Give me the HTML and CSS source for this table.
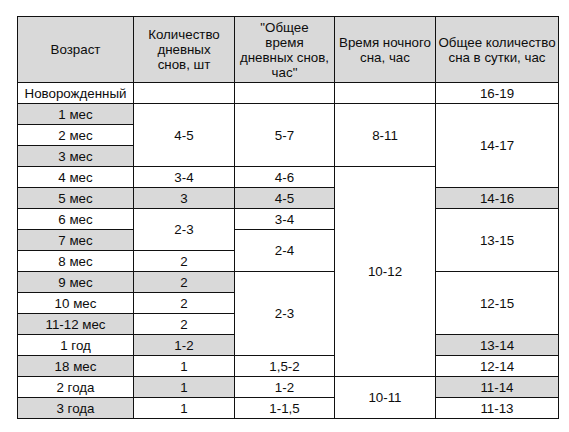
FILE: index.html
```html
<!DOCTYPE html>
<html lang="ru">
<head>
<meta charset="utf-8">
<title>Сон ребенка</title>
<link rel="stylesheet" href="styles.css">
</head>
<body>
<table class="sleep">
  <colgroup>
    <col class="c1"><col class="c2"><col class="c3"><col class="c4"><col class="c5">
  </colgroup>
  <thead>
    <tr class="head">
      <th>Возраст</th>
      <th>Количество<br>дневных<br>снов, шт</th>
      <th>"Общее<br>время<br>дневных снов,<br>час"</th>
      <th>Время ночного<br>сна, час</th>
      <th>Общее количество<br>сна в сутки, час</th>
    </tr>
  </thead>
  <tbody>
    <tr><td>Новорожденный</td><td></td><td></td><td></td><td>16-19</td></tr>
    <tr><td class="g">1 мес</td><td rowspan="3">4-5</td><td rowspan="3">5-7</td><td rowspan="3">8-11</td><td rowspan="4">14-17</td></tr>
    <tr><td>2 мес</td></tr>
    <tr><td class="g">3 мес</td></tr>
    <tr><td>4 мес</td><td>3-4</td><td>4-6</td><td rowspan="10">10-12</td></tr>
    <tr><td class="g">5 мес</td><td class="g">3</td><td class="g">4-5</td><td class="g">14-16</td></tr>
    <tr><td>6 мес</td><td rowspan="2">2-3</td><td>3-4</td><td rowspan="3">13-15</td></tr>
    <tr><td class="g">7 мес</td><td rowspan="2">2-4</td></tr>
    <tr><td>8 мес</td><td>2</td></tr>
    <tr><td class="g">9 мес</td><td class="g">2</td><td rowspan="4">2-3</td><td rowspan="3">12-15</td></tr>
    <tr><td>10 мес</td><td>2</td></tr>
    <tr><td class="g">11-12 мес</td><td>2</td></tr>
    <tr><td>1 год</td><td class="g">1-2</td><td class="g">13-14</td></tr>
    <tr><td class="g">18 мес</td><td>1</td><td>1,5-2</td><td>12-14</td></tr>
    <tr><td>2 года</td><td class="g">1</td><td>1-2</td><td rowspan="2">10-11</td><td class="g">11-14</td></tr>
    <tr><td class="g">3 года</td><td>1</td><td>1-1,5</td><td>11-13</td></tr>
  </tbody>
</table>
</body>
</html>
```

FILE: styles.css
```css
html, body {
  margin: 0;
  padding: 0;
  background: #ffffff;
}

body {
  padding: 16px 0 0 17px;
  font-family: "Liberation Sans", Arial, sans-serif;
  font-size: 13.33px;
  color: #0d0d0d;
}

.sleep {
  border-collapse: collapse;
  table-layout: fixed;
  width: 541px;
}

.c1 { width: 116px; }
.c2 { width: 101px; }
.c3 { width: 100px; }
.c4 { width: 101px; }
.c5 { width: 123px; }

.sleep th,
.sleep td {
  border: 1px solid #111111;
  padding: 0;
  text-align: center;
  vertical-align: middle;
  line-height: 15px;
}

.sleep th {
  font-weight: normal;
  background: #d9d9d9;
  height: 65px;
}

.sleep td {
  height: 20px;
}

.sleep td.g {
  background: #d9d9d9;
}
```
